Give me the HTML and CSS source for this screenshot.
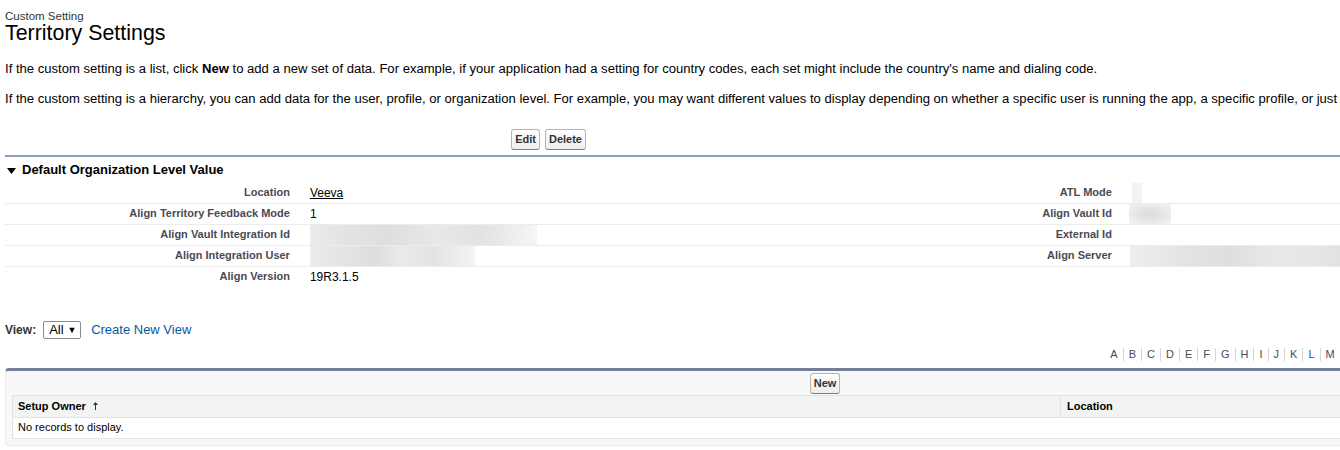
FILE: index.html
```html
<!DOCTYPE html>
<html lang="en">
<head>
<meta charset="utf-8">
<title>Territory Settings</title>
<link rel="stylesheet" href="styles.css">
</head>
<body>
<div class="page">
  <div class="ptHeader">
    <div class="pageType">Custom Setting</div>
    <h1 class="pageTitle">Territory Settings</h1>
  </div>
  <p class="desc">If the custom setting is a list, click <b>New</b> to add a new set of data. For example, if your application had a setting for country codes, each set might include the country's name and dialing code.</p>
  <p class="desc">If the custom setting is a hierarchy, you can add data for the user, profile, or organization level. For example, you may want different values to display depending on whether a specific user is running the app, a specific profile, or just a general user.</p>

  <div class="detail">
    <div class="btnRow">
      <div class="btnTitle"></div>
      <div class="btns">
        <button class="btn">Edit</button>
        <button class="btn">Delete</button>
      </div>
    </div>
    <div class="section">
      <h3 class="secHead"><svg class="twisty" width="9" height="6" viewBox="0 0 9 6"><polygon points="0,0 9,0 4.5,6" fill="#000"/></svg>Default Organization Level Value</h3>
      <table class="detailList">
        <colgroup><col class="cLabel"><col class="cData"><col class="cLabel"><col class="cData"></colgroup>
        <tr>
          <td class="label">Location</td>
          <td class="data"><a class="plain" href="#">Veeva</a></td>
          <td class="label">ATL Mode</td>
          <td class="data"><div class="blur atl"></div></td>
        </tr>
        <tr>
          <td class="label">Align Territory Feedback Mode</td>
          <td class="data">1</td>
          <td class="label">Align Vault Id</td>
          <td class="data"><div class="blur vaultId"></div></td>
        </tr>
        <tr>
          <td class="label">Align Vault Integration Id</td>
          <td class="data"><div class="blur integId"></div></td>
          <td class="label">External Id</td>
          <td class="data"></td>
        </tr>
        <tr>
          <td class="label">Align Integration User</td>
          <td class="data"><div class="blur integUser"></div></td>
          <td class="label">Align Server</td>
          <td class="data"><div class="blur server"></div></td>
        </tr>
        <tr class="last">
          <td class="label">Align Version</td>
          <td class="data">19R3.1.5</td>
          <td class="label"></td>
          <td class="data"></td>
        </tr>
      </table>
    </div>
  </div>

  <div class="viewRow">
    <span class="viewLabel">View:</span>
    <span class="select">All <span class="caret">&#9660;</span></span>
    <a class="link" href="#">Create New View</a>
  </div>

  <div class="rolodex">
    <span class="rl">A</span><span class="rl">B</span><span class="rl">C</span><span class="rl">D</span><span class="rl">E</span><span class="rl">F</span><span class="rl">G</span><span class="rl">H</span><span class="rl">I</span><span class="rl">J</span><span class="rl">K</span><span class="rl">L</span><span class="rl">M</span><span class="rl">N</span><span class="rl">O</span><span class="rl">P</span><span class="rl">Q</span><span class="rl">R</span><span class="rl">S</span><span class="rl">T</span><span class="rl">U</span><span class="rl">V</span><span class="rl">W</span><span class="rl">X</span><span class="rl">Y</span><span class="rl">Z</span><span class="rl">Other</span><span class="rl">All</span>
  </div>

  <div class="listPanel">
    <div class="listBtns"><button class="btn">New</button></div>
    <table class="list">
      <tr class="headerRow">
        <th class="colOwner">Setup Owner <svg class="sortArrow" width="5" height="8" viewBox="0 0 5 8"><path d="M2.5 0 L5 3 L3 3 L3 8 L2 8 L2 3 L0 3 Z" fill="#333"/></svg></th>
        <th>Location</th>
      </tr>
      <tr class="dataRow">
        <td colspan="2">No records to display.</td>
      </tr>
    </table>
  </div>
</div>
</body>
</html>
```
FILE: styles.css
```css
html, body {
  margin: 0;
  padding: 0;
  overflow: hidden;
  background: #fff;
}
body {
  font-family: "Liberation Sans", Arial, sans-serif;
  color: #000;
}
.page {
  width: 1644px;
  padding: 0 5px;
}
.ptHeader {
  padding-top: 10px;
}
.pageType {
  font-size: 11.5px;
  line-height: 13px;
  color: #333;
}
.pageTitle {
  margin: 0;
  font-size: 21.4px;
  line-height: 21px;
  font-weight: normal;
  color: #000;
}
.desc {
  font-size: 13.08px;
  line-height: 16px;
  margin: 13.5px 0 0;
  white-space: nowrap;
}
.desc:first-of-type {
  margin-top: 17px;
}
.btnRow {
  display: grid;
  grid-template-columns: 30% 1fr;
  margin-top: 22px;
  padding-bottom: 5px;
}
.btns {
  display: flex;
  gap: 5px;
  padding-left: 13px;
}
.btn {
  font-family: "Liberation Sans", Arial, sans-serif;
  font-size: 11px;
  font-weight: bold;
  line-height: 13px;
  color: #333;
  padding: 3px 3px;
  margin: 0;
  border: 1px solid #b5b5b5;
  border-bottom-color: #7f7f7f;
  border-radius: 3px;
  background: linear-gradient(#ffffff, #ededed);
}
.section {
  border-top: 2px solid #8e9dbe;
}
.secHead {
  margin: 0;
  padding: 5px 0 6px 2px;
  font-size: 13px;
  line-height: 15px;
  font-weight: bold;
  color: #000;
}
.twisty {
  margin-right: 6px;
  vertical-align: baseline;
}
.detailList {
  width: 100%;
  border-collapse: collapse;
  table-layout: fixed;
}
.cLabel { width: 18%; }
.cData { width: 32%; }
.detailList td {
  height: 20px;
  padding: 0;
  border-bottom: 1px solid #ececec;
  vertical-align: middle;
}
.detailList tr.last td {
  border-bottom: none;
}
.label {
  text-align: right;
  font-size: 11px;
  line-height: 13px;
  font-weight: bold;
  color: #4a4a56;
  padding-right: 11px !important;
  white-space: nowrap;
}
.data {
  font-size: 12px;
  line-height: 14px;
  color: #000;
  padding-left: 9px !important;
  white-space: nowrap;
}
.plain {
  color: #000;
  text-decoration: underline;
}
.blur {
  height: 20px;
}
.atl {
  width: 10px;
  background: #f3f3f3;
}
.vaultId {
  width: 42px;
  margin-left: -3px;
  background: radial-gradient(ellipse at 50% 50%, #dcdcdc 0%, #e6e6e6 45%, #f4f4f4 100%);
}
.integId {
  width: 227px;
  background: linear-gradient(90deg, #ececec 0%, #e3e3e3 15%, #dedede 35%, #e8e8e8 55%, #e2e2e2 75%, #efefef 92%, #f6f6f6 100%);
}
.integUser {
  width: 165px;
  background: linear-gradient(90deg, #ececec 0%, #e4e4e4 20%, #dddddd 40%, #eaeaea 55%, #e3e3e3 75%, #f4f4f4 100%);
}
.server {
  width: 330px;
  margin-left: -2px;
  background: linear-gradient(90deg, #efefef 0%, #e4e4e4 15%, #dedede 30%, #e9e9e9 45%, #e2e2e2 65%, #e6e6e6 85%, #ececec 100%);
}
.viewRow {
  display: flex;
  align-items: center;
  margin-top: 34px;
  height: 18px;
}
.viewLabel {
  font-size: 12px;
  line-height: 14px;
  font-weight: bold;
  color: #333;
  margin-right: 7px;
}
.select {
  display: inline-flex;
  align-items: center;
  box-sizing: border-box;
  height: 18px;
  width: 38px;
  padding: 0 0 0 5px;
  border: 1px solid #8a8a8a;
  border-radius: 2px;
  font-size: 13px;
  color: #000;
}
.caret {
  font-size: 9px;
  margin-left: 4px;
}
.link {
  margin-left: 10px;
  font-size: 13px;
  line-height: 16px;
  color: #015ba7;
  text-decoration: none;
}
.rolodex {
  display: flex;
  justify-content: flex-end;
  margin-top: 9px;
  padding-right: 3px;
  font-size: 11px;
  line-height: 13px;
  color: #4a4a56;
}
.rl {
  padding: 0 5px;
  border-left: 1px solid #d4d4d4;
}
.rl:first-child {
  border-left: none;
}
.listPanel {
  width: 1640px;
  box-sizing: border-box;
  margin-top: 7px;
  border-top: 3px solid #747e96;
  border-left: 1px solid #eaeaea;
  border-right: 1px solid #eaeaea;
  border-bottom: 1px solid #eaeaea;
  border-radius: 4px;
  background: #f8f8f8;
  padding: 0 6px 6px;
}
.listBtns {
  display: flex;
  justify-content: center;
  padding: 2px 0 1px;
}
.listBtns .btn {
  padding: 3px 3px 3px;
}
.list {
  width: 100%;
  border-collapse: collapse;
  background: #fff;
}
.list th {
  text-align: left;
  font-size: 11px;
  line-height: 13px;
  font-weight: bold;
  color: #000;
  background: #f2f3f3;
  border: 1px solid #e0e3e5;
  height: 22px;
  padding: 0 5px;
  box-sizing: border-box;
}
.list th + th {
  padding-left: 6px;
}
.colOwner {
  width: 1048px;
}
.sortArrow {
  margin-left: 4px;
  vertical-align: 0;
}
.list td {
  font-size: 11px;
  line-height: 13px;
  color: #000;
  height: 21px;
  box-sizing: border-box;
  padding: 0 5px;
  border: 1px solid #e0e3e5;
  border-top: none;
  vertical-align: middle;
}
```
